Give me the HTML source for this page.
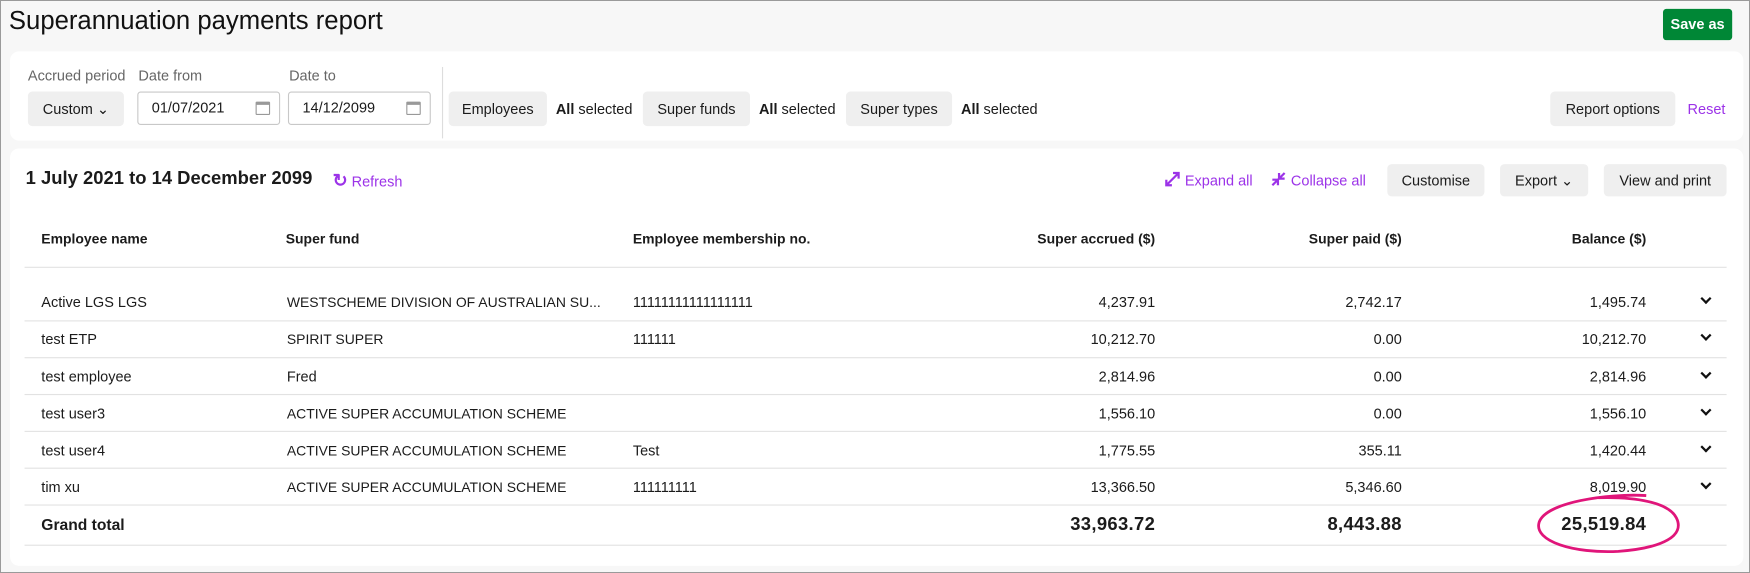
<!DOCTYPE html>
<html><head><meta charset="utf-8"><style>
*{box-sizing:border-box;margin:0;padding:0}
html,body{width:1750px;height:573px;overflow:hidden;background:#f7f7f7}
body{font-family:"Liberation Sans",Arial,sans-serif;color:#1b1b1b;position:relative;}
#frame{position:absolute;left:0;top:0;width:1750px;height:573px;border:1px solid #9a9a9a;z-index:5;pointer-events:none}
#w{position:absolute;left:0;top:0;width:1568px;height:513px;transform:scale(1.1161);transform-origin:0 0}
.abs{position:absolute}
h1{position:absolute;left:8px;top:5px;font-size:23px;font-weight:400;color:#111}
.save{left:1490px;top:8px;width:62px;height:28px;background:#008736;color:#fff;font-weight:700;font-size:13px;border-radius:3px;text-align:center;line-height:28px}
.panel{background:#fff;border-radius:8px}
.lbl{font-size:13px;color:#666}
.btn{background:#efefef;border-radius:4px;font-size:13px;color:#1b1b1b;text-align:center}
.inp{border:1px solid #c8c8c8;border-radius:3px;height:30px;font-size:13px;line-height:28px;padding-left:12px;background:#fff}
.cal{position:absolute;right:8px;top:8px;width:13px;height:12px;border:1px solid #999;border-top:3px solid #999;border-radius:1px}
.t{font-size:13px}
.f{font-size:12.5px;margin-top:1px}
.purple{color:#9c33e8}
.hline{position:absolute;left:22px;width:1525px;height:1px;background:#e2e2e2}
.r{text-align:right;position:absolute}
.chev{position:absolute;left:1525px;width:7px;height:7px;border-right:2px solid #111;border-bottom:2px solid #111;transform:rotate(45deg)}
.gt{font-weight:700;font-size:16.5px;letter-spacing:0.3px}
</style></head><body>
<div id="frame"></div>
<div id="w">
<h1>Superannuation payments report</h1>
<div class="abs save">Save as</div>

<div class="abs panel" style="left:9px;top:46px;width:1553px;height:80px"></div>
<div class="abs lbl" style="left:25px;top:60px">Accrued period</div>
<div class="abs lbl" style="left:124px;top:60px">Date from</div>
<div class="abs lbl" style="left:259px;top:60px">Date to</div>
<div class="abs btn" style="left:25px;top:82px;width:86px;height:31px;line-height:31px">Custom &#8964;</div>
<div class="abs inp" style="left:123px;top:82px;width:128px;">01/07/2021<div class="cal"></div></div>
<div class="abs inp" style="left:258px;top:82px;width:128px;">14/12/2099<div class="cal"></div></div>
<div class="abs" style="left:396px;top:60px;width:1px;height:64px;background:#ddd"></div>
<div class="abs btn" style="left:402px;top:82px;width:88px;height:31px;line-height:31px">Employees</div>
<div class="abs t" style="left:498px;top:90px"><b>All</b> selected</div>
<div class="abs btn" style="left:576px;top:82px;width:96px;height:31px;line-height:31px">Super funds</div>
<div class="abs t" style="left:680px;top:90px"><b>All</b> selected</div>
<div class="abs btn" style="left:758px;top:82px;width:95px;height:31px;line-height:31px">Super types</div>
<div class="abs t" style="left:861px;top:90px"><b>All</b> selected</div>
<div class="abs btn" style="left:1389px;top:82px;width:112px;height:31px;line-height:31px">Report options</div>
<div class="abs t purple" style="left:1512px;top:90px">Reset</div>

<div class="abs panel" style="left:9px;top:133px;width:1553px;height:374px"></div>
<div class="abs" style="left:23px;top:151px;font-size:16.5px;font-weight:700">1 July 2021 to 14 December 2099</div>
<div class="abs t purple" style="left:298px;top:152px;"><span style="font-size:16px;font-weight:700">&#8635;</span> Refresh</div>
<div class="abs t purple" style="left:1043px;top:153px"><svg width="15" height="15" viewBox="0 0 15 15" style="vertical-align:-2px" fill="none" stroke="#9c33e8" stroke-width="2"><path d="M2 13L13 2M8 2h5v5M2 8v5h5"/></svg> Expand all</div>
<div class="abs t purple" style="left:1138px;top:153px"><svg width="15" height="15" viewBox="0 0 15 15" style="vertical-align:-2px" fill="none" stroke="#9c33e8" stroke-width="2"><path d="M2 13L13 2M8 2v5h5M2 8h5v5"/></svg> Collapse all</div>
<div class="abs btn" style="left:1243px;top:147px;width:87px;height:29px;line-height:29px">Customise</div>
<div class="abs btn" style="left:1344px;top:147px;width:79px;height:29px;line-height:29px">Export &#8964;</div>
<div class="abs btn" style="left:1437px;top:147px;width:110px;height:29px;line-height:29px">View and print</div>

<div class="abs t" style="left:37px;top:207px;font-weight:700;font-size:12.5px">Employee name</div>
<div class="abs t" style="left:256px;top:207px;font-weight:700;font-size:12.5px">Super fund</div>
<div class="abs t" style="left:567px;top:207px;font-weight:700;font-size:12.5px">Employee membership no.</div>
<div class="r t" style="right:533px;top:207px;font-weight:700;font-size:12.5px">Super accrued ($)</div>
<div class="r t" style="right:312px;top:207px;font-weight:700;font-size:12.5px">Super paid ($)</div>
<div class="r t" style="right:93px;top:207px;font-weight:700;font-size:12.5px">Balance ($)</div>
<div class="hline" style="top:239px"></div>

<div class="abs t" style="left:37px;top:263px">Active LGS LGS</div><div class="abs f" style="left:257px;top:263px">WESTSCHEME DIVISION OF AUSTRALIAN SU...</div><div class="abs t" style="left:567px;top:263px">11111111111111111</div><div class="r t" style="right:533px;top:263px">4,237.91</div><div class="r t" style="right:312px;top:263px">2,742.17</div><div class="r t" style="right:93px;top:263px">1,495.74</div><div class="chev" style="top:264px"></div><div class="hline" style="top:287px"></div>
<div class="abs t" style="left:37px;top:296px">test ETP</div><div class="abs f" style="left:257px;top:296px">SPIRIT SUPER</div><div class="abs t" style="left:567px;top:296px">111111</div><div class="r t" style="right:533px;top:296px">10,212.70</div><div class="r t" style="right:312px;top:296px">0.00</div><div class="r t" style="right:93px;top:296px">10,212.70</div><div class="chev" style="top:297px"></div><div class="hline" style="top:320px"></div>
<div class="abs t" style="left:37px;top:330px">test employee</div><div class="abs t" style="left:257px;top:330px">Fred</div><div class="r t" style="right:533px;top:330px">2,814.96</div><div class="r t" style="right:312px;top:330px">0.00</div><div class="r t" style="right:93px;top:330px">2,814.96</div><div class="chev" style="top:331px"></div><div class="hline" style="top:353px"></div>
<div class="abs t" style="left:37px;top:363px">test user3</div><div class="abs f" style="left:257px;top:363px">ACTIVE SUPER ACCUMULATION SCHEME</div><div class="r t" style="right:533px;top:363px">1,556.10</div><div class="r t" style="right:312px;top:363px">0.00</div><div class="r t" style="right:93px;top:363px">1,556.10</div><div class="chev" style="top:364px"></div><div class="hline" style="top:386px"></div>
<div class="abs t" style="left:37px;top:396px">test user4</div><div class="abs f" style="left:257px;top:396px">ACTIVE SUPER ACCUMULATION SCHEME</div><div class="abs t" style="left:567px;top:396px">Test</div><div class="r t" style="right:533px;top:396px">1,775.55</div><div class="r t" style="right:312px;top:396px">355.11</div><div class="r t" style="right:93px;top:396px">1,420.44</div><div class="chev" style="top:397px"></div><div class="hline" style="top:419px"></div>
<div class="abs t" style="left:37px;top:429px">tim xu</div><div class="abs f" style="left:257px;top:429px">ACTIVE SUPER ACCUMULATION SCHEME</div><div class="abs t" style="left:567px;top:429px">111111111</div><div class="r t" style="right:533px;top:429px">13,366.50</div><div class="r t" style="right:312px;top:429px">5,346.60</div><div class="r t" style="right:93px;top:429px">8,019.90</div><div class="chev" style="top:430px"></div><div class="hline" style="top:452px"></div>
<div class="abs t" style="left:37px;top:462px;font-weight:700;font-size:14px">Grand total</div>
<div class="r gt" style="right:533px;top:461px">33,963.72</div>
<div class="r gt" style="right:312px;top:461px">8,443.88</div>
<div class="r gt" style="right:93px;top:461px">25,519.84</div>
<div class="hline" style="top:488px"></div>
<svg class="abs" style="left:1370px;top:440px" width="150" height="60" viewBox="0 0 150 60" fill="none" stroke="#e0157a" stroke-width="2.5"><path d="M105 4C70 2 15 10 9 28C4 45 40 56 80 54C120 51 140 40 132 24C125 10 95 5 62 6"/></svg>
</div>
</body></html>
